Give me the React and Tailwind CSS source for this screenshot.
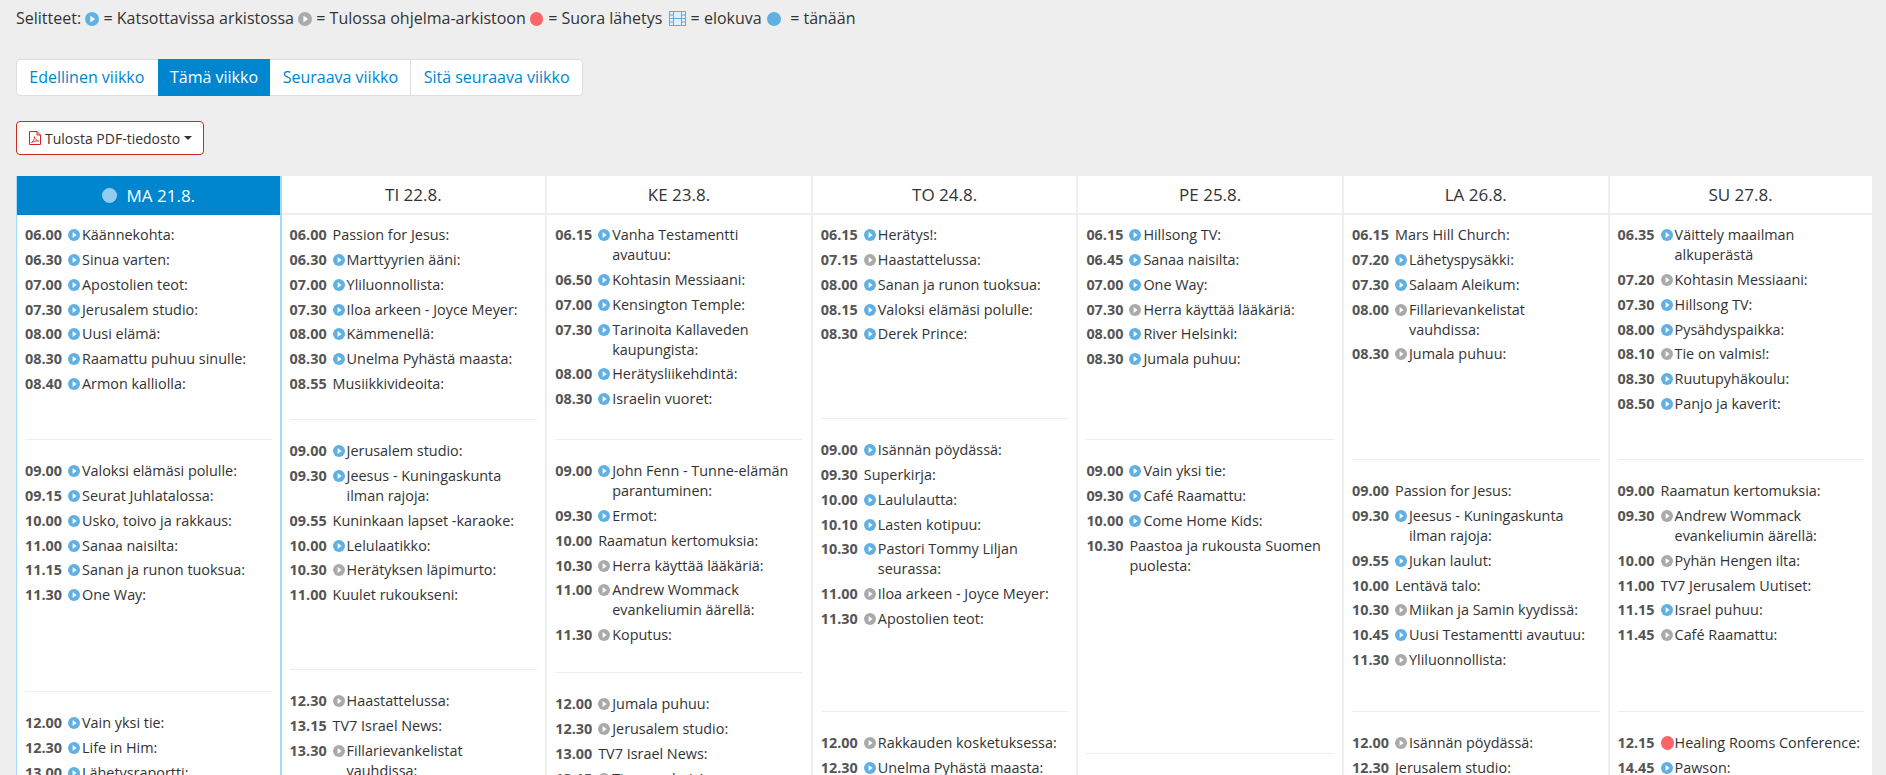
import React from 'react';

const b = 'blue';
const g = 'gray';
const r = 'red';

const days = [
    {
        title: 'MA 21.8.',
        today: true,
        sections: [
            {
                height: 'h-[215px]',
                rows: [
                    ['06.00', b, 'Käännekohta:'],
                    ['06.30', b, 'Sinua varten:'],
                    ['07.00', b, 'Apostolien teot:'],
                    ['07.30', b, 'Jerusalem studio:'],
                    ['08.00', b, 'Uusi elämä:'],
                    ['08.30', b, 'Raamattu puhuu sinulle:'],
                    ['08.40', b, 'Armon kalliolla:'],
                ],
            },
            {
                height: 'h-[252px]',
                rows: [
                    ['09.00', b, 'Valoksi elämäsi polulle:'],
                    ['09.15', b, 'Seurat Juhlatalossa:'],
                    ['10.00', b, 'Usko, toivo ja rakkaus:'],
                    ['11.00', b, 'Sanaa naisilta:'],
                    ['11.15', b, 'Sanan ja runon tuoksua:'],
                    ['11.30', b, 'One Way:'],
                ],
            },
            {
                rows: [
                    ['12.00', b, 'Vain yksi tie:'],
                    ['12.30', b, 'Life in Him:'],
                    ['13.00', b, 'Lähetysraportti:'],
                ],
            },
        ],
    },
    {
        title: 'TI 22.8.',
        sections: [
            {
                height: 'h-[195px]',
                rows: [
                    ['06.00', null, 'Passion for Jesus:'],
                    ['06.30', b, 'Marttyyrien ääni:'],
                    ['07.00', b, 'Yliluonnollista:'],
                    ['07.30', b, 'Iloa arkeen - Joyce Meyer:'],
                    ['08.00', b, 'Kämmenellä:'],
                    ['08.30', b, 'Unelma Pyhästä maasta:'],
                    ['08.55', null, 'Musiikkivideoita:'],
                ],
            },
            {
                height: 'h-[250px]',
                rows: [
                    ['09.00', b, 'Jerusalem studio:'],
                    ['09.30', b, 'Jeesus - Kuningaskunta\nilman rajoja:'],
                    ['09.55', null, 'Kuninkaan lapset -karaoke:'],
                    ['10.00', b, 'Lelulaatikko:'],
                    ['10.30', g, 'Herätyksen läpimurto:'],
                    ['11.00', null, 'Kuulet rukoukseni:'],
                ],
            },
            {
                rows: [
                    ['12.30', g, 'Haastattelussa:'],
                    ['13.15', null, 'TV7 Israel News:'],
                    ['13.30', g, 'Fillarievankelistat\nvauhdissa:'],
                ],
            },
        ],
    },
    {
        title: 'KE 23.8.',
        sections: [
            {
                height: 'h-[215px]',
                rows: [
                    ['06.15', b, 'Vanha Testamentti\navautuu:'],
                    ['06.50', b, 'Kohtasin Messiaani:'],
                    ['07.00', b, 'Kensington Temple:'],
                    ['07.30', b, 'Tarinoita Kallaveden\nkaupungista:'],
                    ['08.00', b, 'Herätysliikehdintä:'],
                    ['08.30', b, 'Israelin vuoret:'],
                ],
            },
            {
                height: 'h-[233px]',
                rows: [
                    ['09.00', b, 'John Fenn - Tunne-elämän\nparantuminen:'],
                    ['09.30', b, 'Ermot:'],
                    ['10.00', null, 'Raamatun kertomuksia:'],
                    ['10.30', g, 'Herra käyttää lääkäriä:'],
                    ['11.00', g, 'Andrew Wommack\nevankeliumin äärellä:'],
                    ['11.30', g, 'Koputus:'],
                ],
            },
            {
                rows: [
                    ['12.00', g, 'Jumala puhuu:'],
                    ['12.30', g, 'Jerusalem studio:'],
                    ['13.00', null, 'TV7 Israel News:'],
                    ['13.15', g, 'Tie on valmis!:'],
                ],
            },
        ],
    },
    {
        title: 'TO 24.8.',
        sections: [
            {
                height: 'h-[194px]',
                rows: [
                    ['06.15', b, 'Herätys!:'],
                    ['07.15', g, 'Haastattelussa:'],
                    ['08.00', b, 'Sanan ja runon tuoksua:'],
                    ['08.15', b, 'Valoksi elämäsi polulle:'],
                    ['08.30', b, 'Derek Prince:'],
                ],
            },
            {
                height: 'h-[293px]',
                rows: [
                    ['09.00', b, 'Isännän pöydässä:'],
                    ['09.30', null, 'Superkirja:'],
                    ['10.00', b, 'Laululautta:'],
                    ['10.10', b, 'Lasten kotipuu:'],
                    ['10.30', b, 'Pastori Tommy Liljan\nseurassa:'],
                    ['11.00', g, 'Iloa arkeen - Joyce Meyer:'],
                    ['11.30', g, 'Apostolien teot:'],
                ],
            },
            {
                rows: [
                    ['12.00', g, 'Rakkauden kosketuksessa:'],
                    ['12.30', b, 'Unelma Pyhästä maasta:'],
                ],
            },
        ],
    },
    {
        title: 'PE 25.8.',
        sections: [
            {
                height: 'h-[215px]',
                rows: [
                    ['06.15', b, 'Hillsong TV:'],
                    ['06.45', b, 'Sanaa naisilta:'],
                    ['07.00', b, 'One Way:'],
                    ['07.30', g, 'Herra käyttää lääkäriä:'],
                    ['08.00', b, 'River Helsinki:'],
                    ['08.30', b, 'Jumala puhuu:'],
                ],
            },
            {
                height: 'h-[314px]',
                rows: [
                    ['09.00', b, 'Vain yksi tie:'],
                    ['09.30', b, 'Café Raamattu:'],
                    ['10.00', b, 'Come Home Kids:'],
                    ['10.30', null, 'Paastoa ja rukousta Suomen\npuolesta:'],
                ],
            },
        ],
    },
    {
        title: 'LA 26.8.',
        sections: [
            {
                height: 'h-[235px]',
                rows: [
                    ['06.15', null, 'Mars Hill Church:'],
                    ['07.20', b, 'Lähetyspysäkki:'],
                    ['07.30', b, 'Salaam Aleikum:'],
                    ['08.00', g, 'Fillarievankelistat\nvauhdissa:'],
                    ['08.30', g, 'Jumala puhuu:'],
                ],
            },
            {
                height: 'h-[252px]',
                rows: [
                    ['09.00', null, 'Passion for Jesus:'],
                    ['09.30', b, 'Jeesus - Kuningaskunta\nilman rajoja:'],
                    ['09.55', b, 'Jukan laulut:'],
                    ['10.00', null, 'Lentävä talo:'],
                    ['10.30', g, 'Miikan ja Samin kyydissä:'],
                    ['10.45', b, 'Uusi Testamentti avautuu:'],
                    ['11.30', g, 'Yliluonnollista:'],
                ],
            },
            {
                rows: [
                    ['12.00', g, 'Isännän pöydässä:'],
                    ['12.30', null, 'Jerusalem studio:'],
                ],
            },
        ],
    },
    {
        title: 'SU 27.8.',
        sections: [
            {
                height: 'h-[235px]',
                rows: [
                    ['06.35', b, 'Väittely maailman\nalkuperästä'],
                    ['07.20', g, 'Kohtasin Messiaani:'],
                    ['07.30', b, 'Hillsong TV:'],
                    ['08.00', b, 'Pysähdyspaikka:'],
                    ['08.10', g, 'Tie on valmis!:'],
                    ['08.30', b, 'Ruutupyhäkoulu:'],
                    ['08.50', b, 'Panjo ja kaverit:'],
                ],
            },
            {
                height: 'h-[252px]',
                rows: [
                    ['09.00', null, 'Raamatun kertomuksia:'],
                    ['09.30', g, 'Andrew Wommack\nevankeliumin äärellä:'],
                    ['10.00', g, 'Pyhän Hengen ilta:'],
                    ['11.00', null, 'TV7 Jerusalem Uutiset:'],
                    ['11.15', b, 'Israel puhuu:'],
                    ['11.45', g, 'Café Raamattu:'],
                ],
            },
            {
                rows: [
                    ['12.15', r, 'Healing Rooms Conference:'],
                    ['14.45', b, 'Pawson:'],
                ],
            },
        ],
    },
];

function PlayIcon({ color, className = 'w-3 h-3' }) {
    const fill = color === 'blue' ? '#5fb0e3' : '#aaaaaa';
    return (
        <svg viewBox="0 0 12 12" className={className}>
            <circle cx="6" cy="6" r="6" fill={fill} />
            <path d="M4.6 3.1 L8.6 6 L4.6 8.9 Z" fill="#fff" />
        </svg>
    );
}

function LiveDot({ className = '' }) {
    return <span className={`inline-block w-[13px] h-[14px] rounded-full bg-[#ff6468] ${className}`} />;
}

function FilmIcon() {
    return (
        <svg viewBox="0 0 17 15" className="inline-block w-[17px] h-[15px] ml-[3px] align-[-2px]">
            <rect x="0.5" y="0.5" width="16" height="14" fill="#e3f0fa" stroke="#62ade0" />
            <path d="M4.5 0.5 V14.5 M12.5 0.5 V14.5 M0.5 4 H4.5 M0.5 7.5 H16.5 M0.5 11 H4.5 M12.5 4 H16.5 M12.5 11 H16.5" stroke="#62ade0" fill="none" />
        </svg>
    );
}

function PdfIcon() {
    return (
        <svg viewBox="0 0 12 14" className="w-3 h-3.5 shrink-0">
            <path d="M0.5 0.5 H8 L11.5 4 V13.5 H0.5 Z" fill="#fff" stroke="#d2231f" />
            <path d="M8 0.5 V4 H11.5" fill="none" stroke="#d2231f" />
            <path d="M2.4 11.6 C4.6 10.2 5.6 7.8 5.4 5.6 C6 8.2 7.4 9.6 9.6 9.9 C7.2 9.8 4.6 10.4 2.4 11.6 Z" fill="none" stroke="#d2231f" strokeWidth="0.8" />
        </svg>
    );
}

function ProgramRow({ time, icon, title }) {
    return (
        <div className="flex leading-5 pb-[4.85px]">
            <span className="w-[43px] shrink-0 font-bold text-[#555]">{time}</span>
            {icon === 'red' && <LiveDot className="shrink-0 mt-[3px] mr-px" />}
            {(icon === 'blue' || icon === 'gray') && <PlayIcon color={icon} className="w-3 h-3 shrink-0 mt-1 mr-0.5" />}
            <span className="whitespace-pre-line">{title}</span>
        </div>
    );
}

function DayColumn({ day }) {
    return (
        <div className={`bg-white ${day.today ? 'border-l border-r-2 border-[#a6dbf8]' : 'border-r-2 border-[#eeeeee] last:border-r-0'}`}>
            <div className={`h-[39px] flex items-center justify-center gap-[10px] text-[17px] ${day.today ? 'bg-[#0085cf] text-white' : 'border-b-2 border-[#eeeeee] text-[#333]'}`}>
                {day.today && <span className="w-[15px] h-[15px] rounded-full bg-[#92cdee]" />}
                <span>{day.title}</span>
            </div>
            <div className="px-2 pt-[10px] text-[14.4px]">
                {day.sections.map((section, i) => (
                    <div
                        key={i}
                        className={`${section.height ? `${section.height} border-b border-[#eeeeee]` : ''} ${i === 0 ? '' : 'pt-[21px]'}`}
                    >
                        {section.rows.map((row) => (
                            <ProgramRow key={row[0]} time={row[0]} icon={row[1]} title={row[2]} />
                        ))}
                    </div>
                ))}
            </div>
        </div>
    );
}

export default function App() {
    return (
        <div className="h-[775px] overflow-hidden bg-[#eeeeee] pl-4 pr-[10px] text-[16px] text-[#333] font-['Open_Sans',sans-serif]">
            <p className="pt-2 h-[59px] leading-5 whitespace-nowrap">
                Selitteet: <PlayIcon color="blue" className="inline-block w-[14px] h-[14px] align-[-2px]" /> = Katsottavissa arkistossa{' '}
                <PlayIcon color="gray" className="inline-block w-[14px] h-[14px] align-[-2px]" /> = Tulossa ohjelma-arkistoon{' '}
                <LiveDot className="mr-px align-[-2px]" /> = Suora lähetys <FilmIcon /> = elokuva{' '}
                <span className="inline-block w-[14px] h-[14px] ml-px mr-px rounded-full bg-[#5fb0e3] align-[-2px]" />  &nbsp;= tänään
            </p>

            <div className="inline-flex h-[37px] rounded border border-[#dddddd] bg-white text-[#0085cf] leading-[35px]">
                <a className="px-[12.3px] border-r border-transparent">Edellinen viikko</a>
                <a className="px-[12.3px] -my-px leading-[37px] bg-[#0085cf] text-white">Tämä viikko</a>
                <a className="px-[12.3px] border-r border-[#dddddd]">Seuraava viikko</a>
                <a className="px-[12.3px]">Sitä seuraava viikko</a>
            </div>

            <div className="mt-[25px] mb-[21px]">
                <button className="flex items-center h-[34px] w-[188px] pl-3 rounded border border-[#cc2a20] bg-white text-[14px] text-[#333]">
                    <PdfIcon />
                    <span className="ml-1">Tulosta PDF-tiedosto</span>
                    <span className="ml-1 border-x-4 border-x-transparent border-t-4 border-t-[#333]" />
                </button>
            </div>

            <div className="grid grid-cols-[repeat(6,265.6px)_262px] h-[700px]">
                {days.map((day) => (
                    <DayColumn key={day.title} day={day} />
                ))}
            </div>
        </div>
    );
}
